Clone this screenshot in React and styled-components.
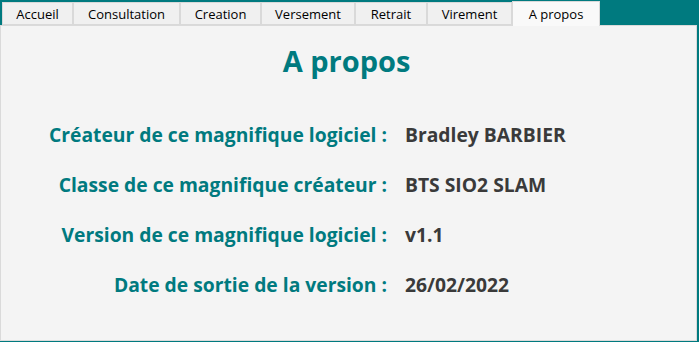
import React from 'react'
import styled, { createGlobalStyle } from 'styled-components'

const tabs = [
  { label: 'Accueil', width: 71 },
  { label: 'Consultation', width: 107 },
  { label: 'Creation', width: 81 },
  { label: 'Versement', width: 94 },
  { label: 'Retrait', width: 72 },
  { label: 'Virement', width: 85 },
  { label: 'A propos', width: 88, active: true },
]

const infos = [
  { label: 'Créateur de ce magnifique logiciel :', value: 'Bradley BARBIER' },
  { label: 'Classe de ce magnifique créateur :', value: 'BTS SIO2 SLAM' },
  { label: 'Version de ce magnifique logiciel :', value: 'v1.1' },
  { label: 'Date de sortie de la version :', value: '26/02/2022' },
]

const App = () => {
  return (
    <Window>
      <GlobalStyle />
      <TabBar>
        {tabs.map((t) => (
          <Tab key={t.label} $width={t.width} $active={t.active}>
            {t.label}
          </Tab>
        ))}
      </TabBar>
      <Panel>
        <Title>A propos</Title>
        <InfoGrid>
          {infos.map((i) => (
            <React.Fragment key={i.label}>
              <Label>{i.label}</Label>
              <Value>{i.value}</Value>
            </React.Fragment>
          ))}
        </InfoGrid>
      </Panel>
    </Window>
  )
}

const GlobalStyle = createGlobalStyle`
  body {
    margin: 0;
    background: #007a7f;
    font-family: "Open Sans", "Noto Sans", sans-serif;
  }
`

const Window = styled.div`
  width: 699px;
  height: 342px;
  background: #007a7f;
  display: flex;
  flex-direction: column;
`

const TabBar = styled.div`
  display: flex;
  align-items: flex-end;
  height: 25px;
  padding-left: 2px;
`

const Tab = styled.div`
  box-sizing: border-box;
  width: ${(p) => p.$width}px;
  height: ${(p) => (p.$active ? 25 : 23)}px;
  margin-bottom: ${(p) => (p.$active ? -1 : 0)}px;
  background: ${(p) => (p.$active ? '#f9f9f9' : '#f0f0f0')};
  border: 1px solid #d9d9d9;
  border-bottom: ${(p) => (p.$active ? 'none' : '1px solid #d9d9d9')};
  display: flex;
  align-items: center;
  justify-content: center;
  padding-top: ${(p) => (p.$active ? 0 : 1)}px;
  font-size: 13px;
  color: #000;
  position: relative;
  z-index: ${(p) => (p.$active ? 1 : 0)};
`

const Panel = styled.div`
  box-sizing: border-box;
  width: 697px;
  flex: 1;
  margin-bottom: 1px;
  background: #f4f4f4;
  border: 1px solid #dadada;
  display: flex;
  flex-direction: column;
  align-items: center;
`

const Title = styled.h1`
  margin: 15px 0 0;
  font-size: 29px;
  line-height: 40px;
  font-weight: 700;
  color: #007a7f;
  padding-right: 4px;
`

const InfoGrid = styled.div`
  align-self: stretch;
  display: grid;
  grid-template-columns: 386px 1fr;
  column-gap: 18px;
  row-gap: 24px;
  margin-top: 41px;
  font-size: 19.3px;
  font-weight: 700;
  line-height: 26px;
`

const Label = styled.div`
  text-align: right;
  color: #007a7f;
`

const Value = styled.div`
  color: #3a3a3a;
`

export default App
